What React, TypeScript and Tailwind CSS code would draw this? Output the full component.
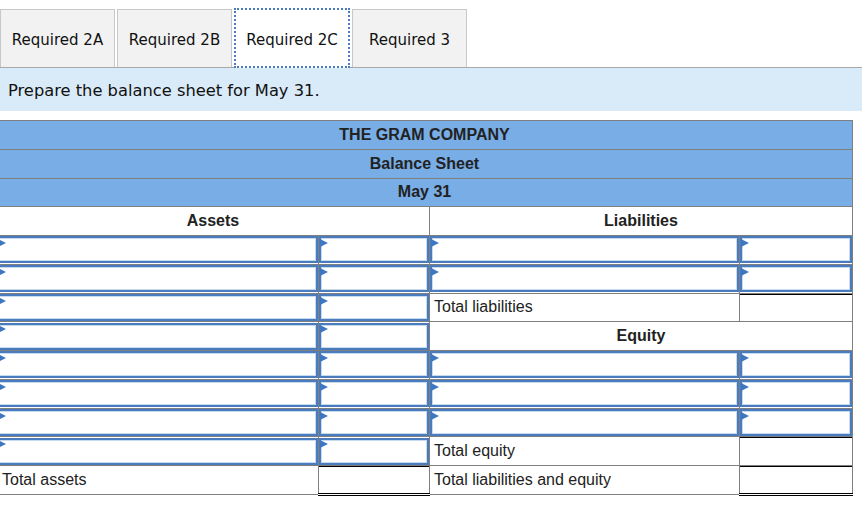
import React from "react";

/* Balance sheet worksheet — tabs, prompt bar and the entry table */

const TABS = ["Required 2A", "Required 2B", "Required 2C", "Required 3"];
const ACTIVE = 2;

const sans = { fontFamily: '"Liberation Sans", Arial, sans-serif' };

function Flag() {
  return (
    <span className="pointer-events-none absolute left-[1px] top-[3px] h-0 w-0 border-y-[4px] border-l-[8px] border-y-transparent border-l-[#3d77c1]" />
  );
}

function EntryCell() {
  return (
    <td className="relative border border-[#7f7f7f] p-0">
      <input
        className="block h-[27px] w-full border-2 border-[#4a7bbd] bg-white shadow-[inset_0_0_0_1px_#c6daf2] outline-none"
        type="text"
      />
      <Flag />
    </td>
  );
}

function LabelCell({ text, colSpan }: { text: string; colSpan?: number }) {
  return (
    <td colSpan={colSpan} className="border border-[#7f7f7f] px-[4px] text-left">
      {text}
    </td>
  );
}

function TotalCell({ double }: { double?: boolean }) {
  return (
    <td
      className={
        double
          ? "border border-[#7f7f7f] border-b-[3px] border-b-black border-double shadow-[inset_0_1px_0_#000]"
          : "border border-[#7f7f7f] shadow-[inset_0_1px_0_#000]"
      }
    />
  );
}

function HeadRow({ text }: { text: string }) {
  return (
    <tr className="h-[28.75px] bg-[#78ade6]">
      <td colSpan={4} className="border border-[#7f7f7f] text-center font-bold">
        {text}
      </td>
    </tr>
  );
}

// right side of each body row, in order from the first entry row down
type Right = "entry" | "totalLiab" | "equity" | "totalEq";
const RIGHT: Right[] = ["entry", "entry", "totalLiab", "equity", "entry", "entry", "entry", "totalEq"];

export default function App() {
  return (
    <div className="min-h-[505px] w-[862px] overflow-hidden bg-white text-[#222]">
      {/* tabs */}
      <div
        className="flex h-[68px] items-end gap-[2px] border-b border-[#a9a9a9] pt-[9px]"
        style={{ fontFamily: '"DejaVu Sans", Verdana, sans-serif' }}
      >
        {TABS.map((t, i) =>
          i === ACTIVE ? (
            <div
              key={t}
              className="relative -mb-px flex h-[60px] w-[116px] items-center justify-center border-2 border-dotted border-[#4a7bbd] bg-white pt-[4px] text-[15px] text-[#111]"
            >
              {t}
            </div>
          ) : (
            <div
              key={t}
              className="flex h-[58px] w-[115px] items-center justify-center border border-b-0 border-[#c8c8c8] bg-[#f2f2f2] pt-[4px] text-[15px] text-[#111]"
            >
              {t}
            </div>
          )
        )}
      </div>

      {/* prompt */}
      <div
        className="flex h-[43px] items-center bg-[#d9eaf8] pl-[8px] pt-[3px] text-[16.3px] text-[#111]"
        style={{ fontFamily: '"DejaVu Sans", Verdana, sans-serif' }}
      >
        Prepare the balance sheet for May 31.
      </div>

      {/* sheet */}
      <table
        className="-ml-[4px] mt-[9px] w-[856px] table-fixed border-collapse text-[16px]"
        style={sans}
      >
        <colgroup>
          <col className="w-[322px]" />
          <col className="w-[111px]" />
          <col className="w-[310px]" />
          <col className="w-[113px]" />
        </colgroup>
        <tbody>
          <HeadRow text="THE GRAM COMPANY" />
          <HeadRow text="Balance Sheet" />
          <HeadRow text="May 31" />
          <tr className="h-[28.75px]">
            <td colSpan={2} className="border border-[#7f7f7f] text-center font-bold">
              Assets
            </td>
            <td colSpan={2} className="border border-[#7f7f7f] text-center font-bold">
              Liabilities
            </td>
          </tr>
          {RIGHT.map((r, i) => (
            <tr key={i} className="h-[28.75px]">
              <EntryCell />
              <EntryCell />
              {r === "entry" && (
                <>
                  <EntryCell />
                  <EntryCell />
                </>
              )}
              {r === "totalLiab" && (
                <>
                  <LabelCell text="Total liabilities" />
                  <TotalCell />
                </>
              )}
              {r === "equity" && (
                <td colSpan={2} className="border border-[#7f7f7f] text-center font-bold">
                  Equity
                </td>
              )}
              {r === "totalEq" && (
                <>
                  <LabelCell text="Total equity" />
                  <TotalCell />
                </>
              )}
            </tr>
          ))}
          <tr className="h-[28.75px]">
            <td className="border border-[#7f7f7f] pl-[5px] text-left">Total assets</td>
            <TotalCell double />
            <LabelCell text="Total liabilities and equity" />
            <TotalCell double />
          </tr>
        </tbody>
      </table>
    </div>
  );
}
